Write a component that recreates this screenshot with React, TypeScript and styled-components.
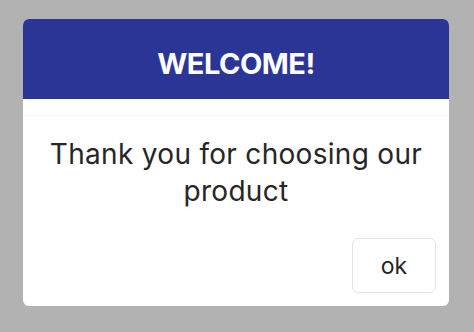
import React from "react";
import styled, { createGlobalStyle } from "styled-components";

const GlobalStyle = createGlobalStyle`
  html, body {
    margin: 0;
    padding: 0;
    background: #b2b2b2;
    font-family: Inter, "Noto Sans", sans-serif;
  }
`;

const Page = styled.div`
  width: 474px;
  height: 332px;
  box-sizing: border-box;
  padding: 19px 25px 26px 23px;
  display: flex;
`;

const Card = styled.div`
  flex: 1;
  display: flex;
  flex-direction: column;
  background: #ffffff;
  border-radius: 6px;
  overflow: hidden;
`;

const Header = styled.div`
  height: 80px;
  box-sizing: border-box;
  padding-top: 9px;
  flex-shrink: 0;
  background: #2b3595;
  display: flex;
  align-items: center;
  justify-content: center;
`;

const Title = styled.h1`
  margin: 0;
  color: #ffffff;
  font-size: 29px;
  font-weight: 700;
  letter-spacing: -0.5px;
`;

const Divider = styled.div`
  height: 16px;
  border-bottom: 1px solid #f4f4f4;
`;

const Message = styled.p`
  margin: 0;
  padding: 20px 10px 0;
  text-align: center;
  color: #262626;
  font-size: 28px;
  line-height: 37px;
  letter-spacing: 0.3px;
`;

const Footer = styled.div`
  margin-top: auto;
  display: flex;
  justify-content: flex-end;
  padding: 0 13px 13px;
`;

const Button = styled.button`
  width: 84px;
  height: 55px;
  background: #ffffff;
  border: 1px solid #e4e4e4;
  border-radius: 6px;
  color: #262626;
  font-family: Inter, "Noto Sans", sans-serif;
  font-size: 23px;
  cursor: pointer;
`;

const App = () => {
  return (
    <>
      <GlobalStyle />
      <Page>
        <Card>
          <Header>
            <Title>WELCOME!</Title>
          </Header>
          <Divider />
          <Message>Thank you for choosing our product</Message>
          <Footer>
            <Button>ok</Button>
          </Footer>
        </Card>
      </Page>
    </>
  );
};

export default App;
